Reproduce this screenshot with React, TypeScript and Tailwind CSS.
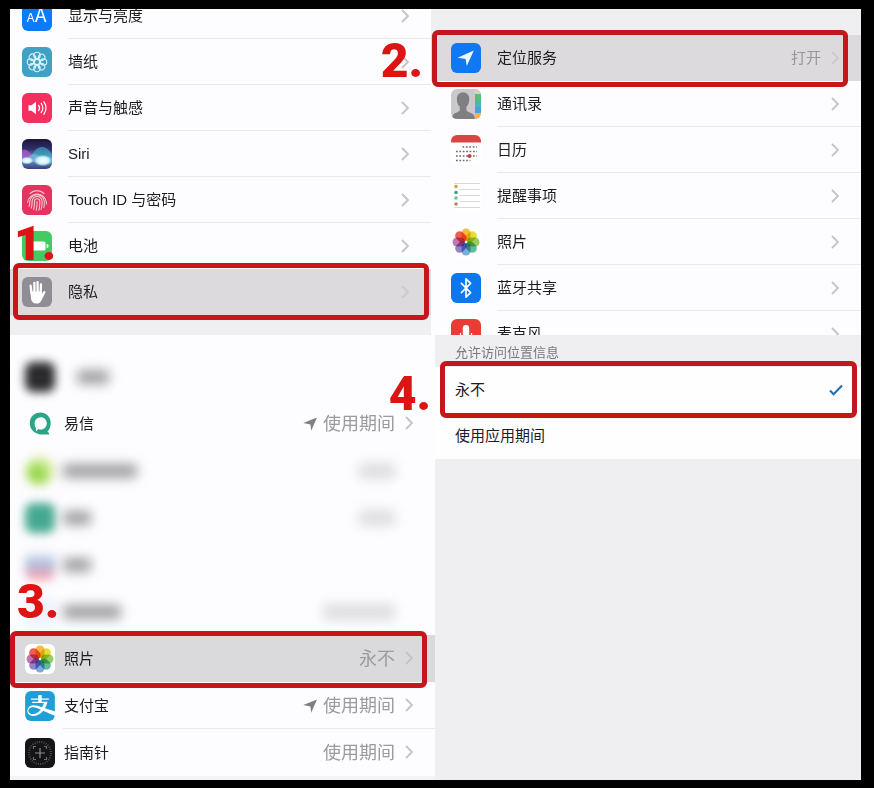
import { useState } from "react"
import type { ReactNode } from "react"
import { Bluetooth } from "lucide-react"
import { SiAlipay } from "react-icons/si"
import clsx from "clsx"

/* ---------- small glyphs ---------- */

function Chevron({ className }: { className?: string }) {
  return (
    <svg viewBox="0 0 8 14" className={clsx("h-3.5 w-2 shrink-0", className ?? "text-[#c3c3c8]")} aria-hidden="true">
      <path d="M1 1l6 6-6 6" fill="none" stroke="currentColor" strokeWidth="1.8" />
    </svg>
  )
}

function LocationArrow() {
  return (
    <svg viewBox="0 0 14 14" className="h-3.5 w-3.5 shrink-0 text-[#7f7f84]" aria-hidden="true">
      <path d="M14 0.5L8.2 13.8 7.4 7.4 0.3 6z" fill="currentColor" />
    </svg>
  )
}

/* ---------- app icons, all drawn on a 30 x 30 tile ---------- */

function Tile({ className, children }: { className?: string; children?: ReactNode }) {
  return (
    <span className={clsx("flex h-[30px] w-[30px] shrink-0 items-center justify-center overflow-hidden rounded-md", className)}>
      {children}
    </span>
  )
}

function Art({ children }: { children: ReactNode }) {
  return (
    <svg viewBox="0 0 30 30" className="h-[30px] w-[30px]" aria-hidden="true">
      {children}
    </svg>
  )
}

const EIGHTHS = [0, 45, 90, 135, 180, 225, 270, 315]

function DisplayIcon() {
  return (
    <Tile className="bg-[#0a7bfa]">
      <Art>
        <text x="4.5" y="21" fontSize="12" fill="#fff" fontFamily="Inter, sans-serif">A</text>
        <text x="12.5" y="21" fontSize="18" fill="#fff" fontFamily="Inter, sans-serif">A</text>
      </Art>
    </Tile>
  )
}

function WallpaperIcon() {
  return (
    <Tile className="bg-[#40a1c4]">
      <Art>
        <g fill="none" stroke="#d8f3fa" strokeWidth="1.1">
          {EIGHTHS.map((a) => (
            <circle key={a} cx="15" cy="8.4" r="3.2" transform={`rotate(${a} 15 15)`} />
          ))}
          {EIGHTHS.map((a) => (
            <path key={a} d="M15 12.6V8.5" transform={`rotate(${a + 22} 15 15)`} />
          ))}
          <circle cx="15" cy="15" r="2.6" />
        </g>
      </Art>
    </Tile>
  )
}

function SoundIcon() {
  return (
    <Tile className="bg-[#f3305f]">
      <Art>
        <path d="M6.5 12.3h3l4.5-3.6v12.6l-4.5-3.6h-3z" fill="#fff" />
        <g fill="none" stroke="#fff" strokeWidth="1.2" strokeLinecap="round">
          <path d="M16.6 12.3a4.6 4.6 0 010 5.4" />
          <path d="M19.2 10.4a7.8 7.8 0 010 9.2" />
          <path d="M21.8 8.7a11 11 0 010 12.6" />
        </g>
      </Art>
    </Tile>
  )
}

function SiriIcon() {
  return (
    <Tile>
      <Art>
        <defs>
          <linearGradient id="siri-sky" x1="0" y1="0" x2="0" y2="1">
            <stop offset="0" stopColor="#191636" />
            <stop offset="0.35" stopColor="#33306e" />
            <stop offset="0.65" stopColor="#6aa5c9" />
            <stop offset="1" stopColor="#3b3f7c" />
          </linearGradient>
          <radialGradient id="siri-glow">
            <stop offset="0" stopColor="#fff" />
            <stop offset="0.6" stopColor="#c8f3fb" />
            <stop offset="1" stopColor="#7fd6ea" stopOpacity="0" />
          </radialGradient>
        </defs>
        <rect width="30" height="30" fill="url(#siri-sky)" />
        <path d="M0 11c5-2 9 3 13 12H0z" fill="#b155c9" opacity="0.75" />
        <path d="M8 22c2-9 7-14 12-14 5 0 8 4 10 8v8z" fill="#3fa8bf" opacity="0.7" />
        <path d="M4 22c4-8 9-9 14-4l4 6z" fill="#8fb4e6" opacity="0.6" />
        <ellipse cx="5" cy="21.5" rx="7" ry="4" fill="url(#siri-glow)" />
        <ellipse cx="21" cy="21.5" rx="10" ry="6" fill="url(#siri-glow)" />
      </Art>
    </Tile>
  )
}

function TouchIdIcon() {
  return (
    <Tile className="bg-[#e2345f]">
      <Art>
        <g fill="none" stroke="#f9c4d0" strokeWidth="1.1" strokeLinecap="round">
          <path d="M8 8.5a10 10 0 0114 0" />
          <path d="M5.6 17.5a9.5 9.5 0 0118.8-.5v2" />
          <path d="M7 21.5c1-2 .6-3.5.8-5.3a7.3 7.3 0 0114.5 0c.1 2.5 0 4.3-.5 6.3" />
          <path d="M9.2 23c1-2.3.8-4.3.9-6.6a5 5 0 0110 0c0 3 0 5.3-1 8" />
          <path d="M11.6 24.5c1-2.7.8-5.3.8-8a2.7 2.7 0 015.4 0c0 3.5 0 6-1 8.7" />
          <path d="M15 16.5c.1 3.3 0 5.8-.8 8.8" />
        </g>
      </Art>
    </Tile>
  )
}

function BatteryIcon() {
  return (
    <Tile className="bg-[#45c963]">
      <Art>
        <rect x="5" y="10.5" width="18.5" height="9" rx="1.5" fill="#fff" />
        <path d="M24.6 13v4a2 2 0 000-4z" fill="#fff" />
      </Art>
    </Tile>
  )
}

function HandIcon() {
  return (
    <Tile className="bg-[#908e94]">
      <Art>
        <g stroke="#fff" strokeLinecap="round" fill="none" strokeWidth="2.3">
          <path d="M9.5 16L8.6 8.6" />
          <path d="M12.4 15V5.8" />
          <path d="M15.6 15V5.2" />
          <path d="M18.6 16l.4-8.6" />
          <path d="M18.8 20.5l3.6-5.3" />
        </g>
        <path d="M8.4 14.5h11.3l.4 2.6 1.6-1 1 .8-3.6 7c-.9 1.7-2.2 2.6-4.6 2.6-3.4 0-5-1.8-5.5-5z" fill="#fff" />
      </Art>
    </Tile>
  )
}

function LocationIcon() {
  return (
    <Tile className="bg-[#0f78f2]">
      <Art>
        <path d="M22.8 7.4L15.8 23 14.6 16 6.6 14.8z" fill="#eafaff" />
      </Art>
    </Tile>
  )
}

function ContactsIcon() {
  return (
    <Tile>
      <Art>
        <rect width="30" height="30" fill="#c9c8ca" />
        <rect x="24" width="6" height="7" fill="#d8cfc4" />
        <rect x="24" y="5" width="6" height="8" fill="#58bd7a" />
        <rect x="24" y="12" width="6" height="7" fill="#45b8b5" />
        <rect x="24" y="18" width="6" height="6" fill="#4aa0d8" />
        <rect x="24" y="24" width="6" height="6" fill="#efb54a" />
        <path d="M12 3.6c4 0 6.2 2.7 6.2 6.6 0 3.4-1.2 6-2.8 7.5v3c0 1.6 2 2.2 4.4 3.2 2.2.9 3.7 1.8 4.1 6.1H1c.2-4.2 1.4-5.3 3.6-6.1 2.4-.9 4.2-1.6 4.2-3.2v-3C7 16.2 5.9 13.6 5.9 10.2 5.9 6.3 8 3.6 12 3.6z" fill="#7f7e80" />
      </Art>
    </Tile>
  )
}

function CalendarIcon() {
  return (
    <Tile className="bg-white">
      <Art>
        <rect width="30" height="7.5" fill="#d84743" />
        <g fill="none" stroke="#6e6668" strokeWidth="1.5" strokeDasharray="1.7 1.7">
          <path d="M11.5 12H26" />
          <path d="M5 16.5h21" />
          <path d="M5 21h21" />
          <path d="M5 25.5h14.5" />
        </g>
        <circle cx="18.5" cy="21" r="2" fill="#cf3d3c" />
      </Art>
    </Tile>
  )
}

function RemindersIcon() {
  return (
    <Tile className="bg-white">
      <Art>
        <g stroke="#d9d8dc" strokeWidth="1">
          <path d="M3 2.5h26M8.5 8.5h20.5M8.5 14.5h20.5M8.5 20.5h20.5M3 26.5h26" />
        </g>
        <circle cx="5" cy="5.5" r="1.8" fill="#e09a4c" />
        <circle cx="5" cy="11.5" r="1.8" fill="#3f9e93" />
        <circle cx="5" cy="17" r="1.8" fill="#6cc08f" />
        <circle cx="5" cy="23" r="1.8" fill="#b58467" />
      </Art>
    </Tile>
  )
}

const PETALS = ["#f7b52a", "#e3dc1c", "#8cc751", "#4fb596", "#6ea3d8", "#8a74c4", "#bd66ab", "#ee4a40"]

function PhotosIcon() {
  return (
    <Tile className="bg-white">
      <Art>
        {PETALS.map((fill, i) => (
          <rect
            key={fill}
            x="10.5"
            y="1.5"
            width="9"
            height="12.5"
            rx="4.5"
            fill={fill}
            opacity="0.9"
            transform={`rotate(${i * 45} 15 15)`}
            className="mix-blend-multiply"
          />
        ))}
      </Art>
    </Tile>
  )
}

function BluetoothIcon() {
  return (
    <Tile className="bg-[#0d78ee]">
      <Bluetooth className="h-[22px] w-[22px] text-white" strokeWidth={1.8} aria-hidden="true" />
    </Tile>
  )
}

function MicIcon() {
  return (
    <Tile className="bg-[#e93c35]">
      <Art>
        <rect x="11.8" y="6" width="6.4" height="13" rx="3.2" fill="#fff" />
        <path d="M9.5 14v2a5.5 5.5 0 0011 0v-2M15 21.5V25" fill="none" stroke="#fff" strokeWidth="1.3" />
      </Art>
    </Tile>
  )
}

function YixinIcon() {
  return (
    <Tile>
      <Art>
        <path
          fillRule="evenodd"
          d="M15.3 3.5C9.2 3.5 4.8 8 4.8 13.9c0 5 2.7 8.5 6.7 10.3 1.6.8 3.6 1.3 5.5 1.3h7.3c-.2-1.4-.9-2.3-1.9-3 2.1-2 3.3-4.9 3.3-8.6 0-5.9-4.4-10.4-10.4-10.4zm.5 4.7c3.4 0 6 2.6 6 6.1s-2.6 6.3-6 6.3c-1 0-1.7-.1-2.4-.5l-2.5 2.3c.3-1.5.2-2.7-.4-3.9-.6-1.2-.9-2.5-.9-4 0-3.5 2.7-6.3 6.2-6.3z"
          fill="#2aa585"
        />
      </Art>
    </Tile>
  )
}

function AlipayIcon() {
  return (
    <Tile className="bg-white">
      <SiAlipay className="h-[30px] w-[30px] text-[#209ed6]" aria-hidden="true" />
    </Tile>
  )
}

function CompassIcon() {
  return (
    <Tile className="bg-[#141416]">
      <Art>
        <circle cx="15" cy="15" r="11" fill="none" stroke="#5b5b5f" strokeWidth="2" strokeDasharray="0.8 1.5" />
        <g stroke="#8b8b90" strokeWidth="1.2">
          <path d="M15 10v10M10 15h10" />
          <path d="M8.5 11V8.5H11M19 8.5h2.5V11M21.5 19v2.5H19M11 21.5H8.5V19" fill="none" stroke="#6b6b70" />
        </g>
      </Art>
    </Tile>
  )
}

/* ---------- callouts ---------- */

// Red frame drawn over a row, with its step number beside it.
function Callout({ step, frame, badge }: { step: number; frame: string; badge: string }) {
  return (
    <span className={clsx("pointer-events-none absolute z-10 rounded-md border-[5px] border-[#c5171b]", frame)}>
      <span className={clsx("absolute font-['Roboto',sans-serif] text-5xl leading-none font-black text-[#dc1414]", badge)}>
        {step}.
      </span>
    </span>
  )
}

/* ---------- rows ---------- */

interface RowProps {
  icon: ReactNode
  label: string
  value?: string
  located?: boolean
  active?: boolean
  divider?: boolean
  callout?: ReactNode
}

function SettingRow({ icon, label, value, active, divider = true, callout }: RowProps) {
  return (
    <li className={clsx("relative h-[46px] shrink-0", active && "bg-[#dcdadd]")}>
      <button type="button" className="flex h-full w-full items-center gap-4 pl-3 text-left">
        {icon}
        <span className={clsx("flex h-full flex-1 items-center gap-2.5 border-b pr-[22px]", divider ? "border-[#e9e8ec]" : "border-transparent")}>
          <span className="flex-1 pt-px">{label}</span>
          {value && <span className="pt-px text-[#98979c]">{value}</span>}
          <Chevron className={active ? "text-[#cbc9ce]" : undefined} />
        </span>
      </button>
      {callout}
    </li>
  )
}

function AppRow({ icon, label, value, located, active, divider = false, callout }: RowProps) {
  return (
    <li className={clsx("relative h-[47px]", active && "bg-[#dad9db]")}>
      <button type="button" className="flex h-full w-full items-center gap-2 pl-[15px] text-left">
        {icon}
        <span className={clsx("flex h-full flex-1 items-center gap-2.5 border-b pr-[22px] pl-px", divider ? "border-[#e9e8ec]" : "border-transparent")}>
          <span className="flex-1 pt-0.5">{label}</span>
          <span className="flex items-center gap-1.5 pt-0.5 text-lg text-[#9b9a9e]">
            {located && <LocationArrow />}
            {value}
          </span>
          <Chevron className={active ? "text-[#c3c2c6]" : undefined} />
        </span>
      </button>
      {callout}
    </li>
  )
}

// An app whose name has been smudged out.
function HiddenRow({ icon, label, value }: { icon: ReactNode; label: string; value?: string }) {
  return (
    <li className="flex h-[47px] items-center gap-2 pr-10 pl-[15px]" aria-hidden="true">
      {icon}
      <span className={clsx("h-3.5 rounded-sm bg-[#a09fa1] blur-[6px]", label)} />
      <span className="flex-1" />
      {value && <span className={clsx("h-4 rounded-sm bg-[#dedde1] blur-[6px]", value)} />}
    </li>
  )
}

const SMUDGE = "h-[30px] w-[30px] shrink-0 blur-[5px]"

function RadioRow({ label, checked, onSelect, callout }: { label: string; checked: boolean; onSelect: () => void; callout?: ReactNode }) {
  return (
    <label className="relative flex h-[46px] items-center bg-[#fefefe] pr-[18px] pl-5">
      <input type="radio" name="location-access" className="appearance-none" checked={checked} onChange={onSelect} />
      <span className="flex-1">{label}</span>
      {checked && (
        <svg viewBox="0 0 14 12" className="h-3 w-3.5 text-[#2274b0]" aria-hidden="true">
          <path d="M1 6.5l3.6 3.7L13 1.5" fill="none" stroke="currentColor" strokeWidth="2.2" />
        </svg>
      )}
      {callout}
    </label>
  )
}

/* ---------- page ---------- */

export default function App() {
  const [access, setAccess] = useState("永不")

  return (
    <main className="min-h-screen bg-black pt-[9px] pr-[13px] pb-2 pl-2.5 font-['Liberation_Sans','Noto_Sans_CJK_SC',sans-serif] text-[15px] leading-5 text-[#1c1c1e]">
      <div className="grid grid-cols-[421fr_430fr]">
        <section className="bg-[#efeff1] pb-5" aria-label="设置">
          <ul className="bg-[#fdfcfe]">
            <div className="flex h-[30px] flex-col justify-end overflow-hidden">
              <SettingRow icon={<DisplayIcon />} label="显示与亮度" />
            </div>
            <SettingRow icon={<WallpaperIcon />} label="墙纸" />
            <SettingRow icon={<SoundIcon />} label="声音与触感" />
            <SettingRow icon={<SiriIcon />} label="Siri" />
            <SettingRow icon={<TouchIdIcon />} label="Touch ID 与密码" />
            <SettingRow icon={<BatteryIcon />} label="电池" divider={false} />
            <SettingRow
              icon={<HandIcon />}
              label="隐私"
              active
              divider={false}
              callout={<Callout step={1} frame="-top-1.5 -bottom-[5px] left-[3px] right-0.5" badge="bottom-full -left-1" />}
            />
          </ul>
        </section>

        <section className="bg-[#efeef1] pt-[26px]" aria-label="隐私">
          <ul className="bg-[#fdfcfe]">
            <SettingRow
              icon={<span className="pl-2"><LocationIcon /></span>}
              label="定位服务"
              value="打开"
              active
              divider={false}
              callout={<Callout step={2} frame="-top-[5px] -bottom-1.5 left-px right-[13px]" badge="top-0.5 right-full mr-3.5" />}
            />
            <SettingRow icon={<span className="pl-2"><ContactsIcon /></span>} label="通讯录" />
            <SettingRow icon={<span className="pl-2"><CalendarIcon /></span>} label="日历" />
            <SettingRow icon={<span className="pl-2"><RemindersIcon /></span>} label="提醒事项" />
            <SettingRow icon={<span className="pl-2"><PhotosIcon /></span>} label="照片" />
            <SettingRow icon={<span className="pl-2"><BluetoothIcon /></span>} label="蓝牙共享" />
            <div className="h-6 overflow-hidden">
              <SettingRow icon={<span className="pl-2"><MicIcon /></span>} label="麦克风" divider={false} />
            </div>
          </ul>
        </section>
      </div>

      <div className="grid grid-cols-[425fr_426fr]">
        <section className="bg-[#fdfcfe] pt-[18px]" aria-label="定位服务">
          <ul className="border-b-4 border-[#f3f2f4]">
            <HiddenRow icon={<span className={clsx(SMUDGE, "rounded-lg bg-[#2a292b]")} />} label="ml-3.5 w-8" />
            <AppRow icon={<YixinIcon />} label="易信" value="使用期间" located />
            <HiddenRow
              icon={<span className={clsx(SMUDGE, "rounded-full bg-radial-[at_40%_60%] from-[#93d645] from-20% via-[#cdeb9c] via-50% to-[#fff4d8]")} />}
              label="w-[74px]"
              value="w-9"
            />
            <HiddenRow icon={<span className={clsx(SMUDGE, "rounded-lg bg-[#46a890]")} />} label="w-7" value="w-9" />
            <HiddenRow
              icon={<span className={clsx(SMUDGE, "rounded-lg bg-linear-to-b from-white via-[#a9bce0] via-45% to-[#ff9aa6]")} />}
              label="w-7"
            />
            <HiddenRow icon={<span className={clsx(SMUDGE, "rounded-lg bg-[#edf3fd]")} />} label="w-[58px]" value="w-[72px]" />
            <AppRow
              icon={<PhotosIcon />}
              label="照片"
              value="永不"
              active
              callout={<Callout step={3} frame="-top-1 -bottom-1.5 left-0 right-2" badge="bottom-full left-0.5 mb-2.5" />}
            />
            <AppRow icon={<AlipayIcon />} label="支付宝" value="使用期间" located divider />
            <AppRow icon={<CompassIcon />} label="指南针" value="使用期间" />
          </ul>
        </section>

        <section className="bg-[#efeef1]">
          <fieldset>
            <legend className="flex h-8 items-center pt-1 pl-5 text-[13px] text-[#78777c]">允许访问位置信息</legend>
            <RadioRow
              label="永不"
              checked={access === "永不"}
              onSelect={() => setAccess("永不")}
              callout={<Callout step={4} frame="-top-1.5 -bottom-[5px] left-[5px] right-1" badge="top-1 right-full mr-3.5" />}
            />
            <RadioRow label="使用应用期间" checked={access === "使用应用期间"} onSelect={() => setAccess("使用应用期间")} />
          </fieldset>
        </section>
      </div>
    </main>
  )
}
